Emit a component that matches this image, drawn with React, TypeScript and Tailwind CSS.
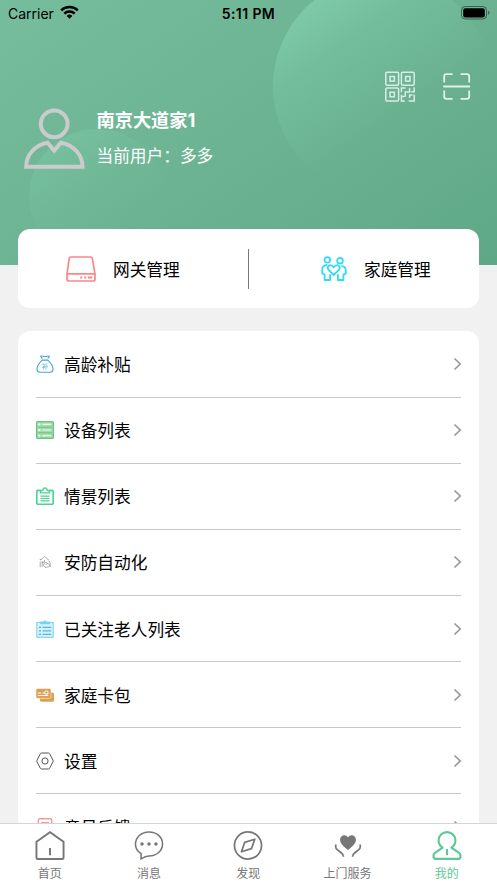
import type { ReactNode } from "react";

interface MenuEntry {
  label: string;
  icon: ReactNode;
}

interface TabEntry {
  label: string;
  icon: ReactNode;
  active?: boolean;
}

const MENU: MenuEntry[] = [
  { label: "高龄补贴", icon: <SubsidyIcon /> },
  { label: "设备列表", icon: <DeviceIcon /> },
  { label: "情景列表", icon: <SceneIcon /> },
  { label: "安防自动化", icon: <SecurityIcon /> },
  { label: "已关注老人列表", icon: <FollowIcon /> },
  { label: "家庭卡包", icon: <CardsIcon /> },
  { label: "设置", icon: <SettingsIcon /> },
  { label: "意见反馈", icon: <FeedbackIcon /> },
];

const TABS: TabEntry[] = [
  { label: "首页", icon: <HomeIcon /> },
  { label: "消息", icon: <MessageIcon /> },
  { label: "发现", icon: <CompassIcon /> },
  { label: "上门服务", icon: <ServiceIcon /> },
  { label: "我的", icon: <MineIcon />, active: true },
];

export default function App() {
  return (
    <div className="flex h-[883px] w-[497px] flex-col overflow-hidden bg-[#f1f1f1] font-['Inter','Noto_Sans_CJK_SC',sans-serif] text-black">
      <main className="min-h-0 flex-1 overflow-hidden">
        <Header />
        <QuickActions />
        <section className="mx-[18px] mt-[23px] rounded-t-xl bg-white px-[18px] pt-[0.4px]">
          {MENU.map((entry) => (
            <MenuRow key={entry.label} {...entry} />
          ))}
        </section>
      </main>
      <TabBar />
    </div>
  );
}

function Header() {
  return (
    <header className="relative h-[265px] overflow-hidden bg-[linear-gradient(145deg,#76bd9d_0%,#6cb393_50%,#5fa887_100%)]">
      <span className="absolute top-[-24px] left-[273px] size-[220px] rounded-full bg-[linear-gradient(145deg,rgba(136,214,178,0.8)_5%,rgba(122,199,166,0.45)_32%,rgba(108,180,148,0)_62%)]" />
      <span className="absolute top-[129px] left-[29px] size-[136px] rounded-full bg-[linear-gradient(145deg,rgba(126,203,170,0.5)_5%,rgba(117,190,158,0.3)_40%,rgba(108,180,148,0)_70%)]" />
      <div className="relative">
        <StatusBar />
        <div className="flex h-[76px] items-end justify-end gap-[28px] pr-[26px]">
          <QrIcon />
          <ScanIcon />
        </div>
        <div className="mt-[6px] flex h-[62px] items-center pl-6">
          <AvatarIcon />
          <div className="-mt-[3px] ml-[11.5px] text-white">
            <p className="text-[18.2px] leading-[27px] font-bold">南京大道家1</p>
            <p className="mt-[9px] text-[16.7px] leading-[26px]">当前用户：多多</p>
          </div>
        </div>
      </div>
    </header>
  );
}

function StatusBar() {
  return (
    <div className="grid h-[26px] grid-cols-3 items-center pr-[7px] pl-[8px]">
      <div className="flex items-center gap-1.5 text-[14px]">
        <span>Carrier</span>
        <svg width="19" height="14" viewBox="0 0 19 14" className="-mt-0.5">
          <g fill="none" stroke="#000" strokeWidth="2.5">
            <path d="M1.2 5.4a11.8 11.8 0 0 1 16.6 0" />
            <path d="M4.3 8.6a7.4 7.4 0 0 1 10.4 0" />
          </g>
          <path d="M9.5 13.7 6.7 10.9a4 4 0 0 1 5.6 0z" />
        </svg>
      </div>
      <span className="-ml-px text-center text-[14px] font-semibold tracking-[0.4px]">5:11 PM</span>
      <div className="flex justify-end">
        <svg width="29" height="14" viewBox="0 0 29 14">
          <rect x=".5" y=".5" width="25" height="12.5" rx="3.7" fill="none" stroke="#000" strokeOpacity=".45" />
          <rect x="2.2" y="2.2" width="21.6" height="9.2" rx="2" />
          <path d="M27.2 4.8c1.7.7 1.7 3.3 0 4z" fillOpacity=".5" />
        </svg>
      </div>
    </div>
  );
}

function QuickActions() {
  return (
    <section className="relative mx-[18px] -mt-9 grid h-[79px] grid-cols-[230px_1px_230px] items-center rounded-xl bg-white text-[16.7px]">
      <div className="flex items-center pt-[2px] pl-[48px]">
        <GatewayIcon />
        <span className="ml-[17px] pt-[3px]">网关管理</span>
      </div>
      <span className="h-10 bg-[#777]" />
      <div className="flex items-center pt-[2px] pl-[72px]">
        <FamilyIcon />
        <span className="ml-[17px] pt-[3px]">家庭管理</span>
      </div>
    </section>
  );
}

function MenuRow({ label, icon }: MenuEntry) {
  return (
    <div className="flex h-[66.15px] items-center border-b border-[#c8c8c8]">
      <span className="w-7">{icon}</span>
      <span className="flex-1 pt-[3px] text-[16.7px]">{label}</span>
      <svg width="9" height="14" viewBox="0 0 9 14" className="-mr-[0.5px]">
        <path d="m1.5 1.5 5.7 5.5-5.7 5.5" fill="none" stroke="#999" strokeWidth="1.7" />
      </svg>
    </div>
  );
}

function TabBar() {
  return (
    <nav className="flex h-[60px] shrink-0 border-t border-[#d5d5d5] bg-white pt-[7px] pr-[0.5px]">
      {TABS.map(({ label, icon, active }) => (
        <div
          key={label}
          className={
            active
              ? "flex flex-1 flex-col items-center text-[#5cc995]"
              : "flex flex-1 flex-col items-center text-[#777]"
          }
        >
          {icon}
          <span className="mt-[5px] text-[12px] leading-[18px]">{label}</span>
        </div>
      ))}
    </nav>
  );
}

function AvatarIcon() {
  return (
    <svg width="61" height="62" viewBox="0 0 61 62" fill="none" stroke="#cbcbcb" strokeWidth="4">
      <circle cx="30.2" cy="15.8" r="13.4" />
      <path d="M2.2 58.7c0-11.5 8.3-21.6 21.4-24l6.6 8 6.7-8c13.1 2.4 21.6 12.5 21.6 24z" />
    </svg>
  );
}

function QrIcon() {
  return (
    <svg width="30" height="31" viewBox="0 0 30 31" fill="none" stroke="#fff" strokeOpacity=".75" strokeWidth="1.5">
      <rect x=".8" y="1.2" width="12.8" height="13" rx="1.2" />
      <rect x="16.4" y="1.2" width="12.8" height="13" rx="1.2" />
      <rect x=".8" y="17" width="12.8" height="13" rx="1.2" />
      <rect x="5" y="5.5" width="4.4" height="4.6" />
      <rect x="20.6" y="5.5" width="4.4" height="4.6" />
      <rect x="5" y="21.2" width="4.4" height="4.6" />
      <path d="M16.4 21.2V17h4.2M16.4 23.8V30h3.5M20.2 25.7V21h4.4v-4M29.2 16.2v4.5h-3M29.2 23.5V30h-5.6M24.6 27v-3h3M16.4 25.6h3.4" />
    </svg>
  );
}

function ScanIcon() {
  return (
    <svg width="28" height="31" viewBox="0 0 28 31" fill="none" stroke="#fff" strokeOpacity=".82" strokeWidth="1.8">
      <path d="M1.2 11.5V5.5q0-2.3 2.3-2.3H9.6M17.6 3.2h6.3q2.3 0 2.3 2.3v6M1.2 19.5v6q0 2.3 2.3 2.3H9.6M17.6 27.8h6.3q2.3 0 2.3-2.3v-6M.3 15.5h26.8" />
    </svg>
  );
}

function GatewayIcon() {
  return (
    <svg width="30" height="26" viewBox="0 0 30 26" fill="none" stroke="#fb858b" strokeWidth="1.7">
      <path d="M5 1h19.5q1.6 0 1.9 1.7L29 18v5.3q0 1.7-1.7 1.7H2.7Q1 25 1 23.3V18L3.2 2.7Q3.4 1 5 1zM1.2 17.8h27.6" />
      <path d="M14.2 21.5h2M18.2 21.5h2M21.8 21.5h4.5" strokeWidth="2" />
    </svg>
  );
}

function FamilyIcon() {
  return (
    <svg width="26" height="26" viewBox="0 0 26 26" fill="none" stroke="#2ddcf5" strokeWidth="1.8" strokeLinejoin="round">
      <circle cx="6.3" cy="3.9" r="2.8" />
      <circle cx="19" cy="4.7" r="2.8" />
      <path d="M12.7 19 7.8 14.2C4.4 10.3 9.6 7 12.7 11.3c3.1-4.3 8.3-1 4.9 2.9z" />
      <path d="M6.2 9C2.7 8.8 1.2 11 1.2 14v3.5l2.4 1V24h5.5v-5.8M20.3 10.2c3.1 0 4.5 1.8 4.5 4.5v2.9l-2.4 1V24h-5.5v-5.8" />
    </svg>
  );
}

function SubsidyIcon() {
  return (
    <svg width="18" height="18" viewBox="0 0 18 18" fill="none" stroke="#44a7de" strokeWidth="1.1">
      <path d="M6 5.3C3 8 1 11.2 1 14.3c0 2.2 1 3 3 3h10c2 0 3-.8 3-3 0-3.1-2-6.3-5-9zM6.3 3.8 4.7 1.3c1.6-1 2.5.6 4.3.2 1.8.4 2.7-1.2 4.3-.2l-1.6 2.5M6 5h6" />
      <text x="9" y="14" textAnchor="middle" fontSize="6.5" fill="#44a7de" stroke="none">
        补
      </text>
    </svg>
  );
}

function DeviceIcon() {
  return (
    <svg width="18" height="18" viewBox="0 0 18 18">
      <rect x=".6" y=".6" width="16.8" height="16.8" rx="1.2" fill="#a2dcae" stroke="#69c37e" strokeWidth="1.2" />
      <path d="M2 6.2h14M2 11.8h14" stroke="#69c37e" />
      <path d="M6.5 3.4h8.7M6.5 9h8.7M6.5 14.6h8.7" stroke="#e8fae9" strokeWidth="1.1" />
      <path d="M2.3 3.4h2M2.3 9h2M2.3 14.6h2" stroke="#fff" strokeWidth="1.9" />
    </svg>
  );
}

function SceneIcon() {
  return (
    <svg width="18" height="18" viewBox="0 0 18 18" fill="none" stroke="#45d493">
      <path d="M5 3.4H2q-1.2 0-1.2 1.2v11.5q0 1.2 1.2 1.2h14q1.2 0 1.2-1.2V4.6q0-1.2-1.2-1.2h-3" strokeWidth="1.6" />
      <path d="M4.5 5.9V4.2l2.4-1Q7 .9 9 .9t2.1 2.3l2.4 1v1.7z" strokeWidth="1.4" />
      <path d="M4.5 9.2h9M4.5 11.5h9M4.5 13.8h9" strokeWidth="1.2" />
    </svg>
  );
}

function SecurityIcon() {
  return (
    <svg width="18" height="18" viewBox="0 0 18 18" fill="none" stroke="#999" strokeWidth=".8">
      <path d="m4.5 7 4-3.5 4.7 4M5.5 6.5H3.7M4.2 8.5v5.7M6.2 8v6M5.8 9.5h2.7M8.5 7v2M8 10.5l2-1.2 3.8 2.7-1.2 2-3.5.3-1.5-1.5zM10 11.8l1.5-1.5M13 8l1.2 2v4" />
    </svg>
  );
}

function FollowIcon() {
  return (
    <svg width="18" height="18" viewBox="0 0 18 18" fill="none" stroke="#78cff1">
      <rect x=".8" y="2.6" width="16.4" height="14.7" fill="#d6f1fd" strokeWidth="1" />
      <path d="M4.5 3.7V2h3Q9-.6 10.5 2h3v1.7z" fill="#78cff1" />
      <path d="M3 7.3h2M3 10.8h2M3 14.3h2" stroke="#3fb5e5" strokeWidth="1.3" />
      <path d="M6.5 7.3h8.8M6.5 10.8h8.8M6.5 14.3h8.8" stroke="#4bbce9" strokeWidth="1.2" />
    </svg>
  );
}

function CardsIcon() {
  return (
    <svg width="18" height="18" viewBox="0 0 18 18">
      <rect x="4" y="6.5" width="14" height="9.2" rx="1.5" fill="#dda052" />
      <rect x="0" y="2.4" width="15" height="10" rx="1.5" fill="#dda052" stroke="#fff" strokeWidth=".5" />
      <path d="M1.8 7h3.5M6.4 7h1.8M1.8 9.5h10.5M8.8 8V6.2q0-1.3 1.6-1.3T12 6.2V8z" fill="none" stroke="#fff" strokeWidth="1" />
    </svg>
  );
}

function SettingsIcon() {
  return (
    <svg width="18" height="18" viewBox="0 0 18 18" fill="none" stroke="#555" strokeWidth="1">
      <path d="M5.4 1h7.2q.7 0 1 .6L17 8.2q.4.8 0 1.6l-3.4 6.6q-.3.6-1 .6H5.4q-.7 0-1-.6L1 9.8q-.4-.8 0-1.6l3.4-6.6q.3-.6 1-.6z" />
      <circle cx="9" cy="9" r="3.1" />
    </svg>
  );
}

function FeedbackIcon() {
  return (
    <svg width="18" height="18" viewBox="0 0 18 18" fill="none" stroke="#fa969a" strokeWidth="1.4">
      <rect x="2.3" y=".8" width="13.4" height="16.4" rx="1.5" />
      <path d="M5 4.7h8M5 8h8" />
    </svg>
  );
}

function HomeIcon() {
  return (
    <svg width="30" height="30" viewBox="0 0 30 30" fill="none" stroke="currentColor" strokeWidth="2">
      <path d="M1 11.2 15 1.3l14 9.9v16.2q0 1.6-1.6 1.6H2.6Q1 29 1 27.4zM15 17.5V25" />
    </svg>
  );
}

function MessageIcon() {
  return (
    <svg width="30" height="30" viewBox="0 0 30 30" fill="none" stroke="currentColor" strokeWidth="1.6">
      <path d="M6.8 28.8V23.3C3 21.1 1 17.6 1 13.7 1 6.6 7 1 15 1s14 5.4 14 12.4-6 12.5-14 12.5q-3.8.2-8.2 2.9z" />
      <g fill="currentColor" stroke="none">
        <circle cx="7.8" cy="13.4" r="1.8" />
        <circle cx="15" cy="13.4" r="1.8" />
        <circle cx="22.2" cy="13.4" r="1.8" />
      </g>
    </svg>
  );
}

function CompassIcon() {
  return (
    <svg width="30" height="30" viewBox="0 0 30 30" fill="none" stroke="currentColor" strokeWidth="1.8" strokeLinejoin="round">
      <circle cx="15" cy="15" r="14" />
      <path d="m22 8.5-3.4 9.7L8.3 21.5l3.2-9.7z" />
    </svg>
  );
}

function ServiceIcon() {
  return (
    <svg width="30" height="30" viewBox="0 0 30 30" fill="none" stroke="currentColor" strokeWidth="1.8">
      <path
        d="M15 19.6C10.6 16.2 6.8 13 6.8 9c0-5 6-6.3 8.2-2.3C17.2 2.7 23.2 4 23.2 9c0 4-3.8 7.2-8.2 10.6z"
        fill="currentColor"
        stroke="none"
      />
      <path d="M2.3 14v2.2q0 1.8 1.5 3l4.5 3.5q2 1.6 2 4M27.7 14v2.2q0 1.8-1.5 3l-4.5 3.5q-2 1.6-2 4" />
    </svg>
  );
}

function MineIcon() {
  return (
    <svg width="30" height="30" viewBox="0 0 30 30" fill="none" stroke="currentColor" strokeWidth="2.2" strokeLinejoin="round">
      <path d="M10.5 17.3C7.8 15.5 6.3 13 6.3 9.8c0-5 3.8-8.6 8.7-8.6s8.7 3.6 8.7 8.6c0 3.2-1.5 5.7-4.2 7.5l8 5.3q1.4.9 1.4 2.5v1.6q0 2.1-2 2.1H3.1q-2 0-2-2.1v-1.6q0-1.6 1.4-2.5zM15 18.5V25" />
    </svg>
  );
}
